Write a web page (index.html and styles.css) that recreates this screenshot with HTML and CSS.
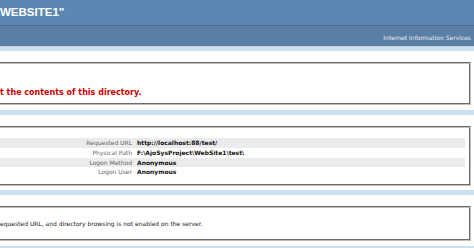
FILE: index.html
```html
<!DOCTYPE html>
<html lang="en">
<head>
    <meta charset="UTF-8">
    <title>IIS 7.5 Detailed Error - 403.14 - Forbidden</title>
    <link rel="stylesheet" href="styles.css">
</head>
<body>
    <div id="header">
        <h1>WEBSITE1"</h1>
    </div>
    <div id="server_version">
        <p>Internet Information Services</p>
    </div>

    <div class="content-container">
        <fieldset>
            <h3>t the contents of this directory.</h3>
        </fieldset>
    </div>

    <div class="content-container">
        <fieldset>
            <div class="details">
                <div class="row alt">
                    <span class="left-cell"></span>
                    <span class="label">Requested URL</span>
                    <span class="value">http://localhost:88/test/</span>
                </div>
                <div class="row">
                    <span class="left-cell"></span>
                    <span class="label">Physical Path</span>
                    <span class="value">F:\AjoSysProject\WebSite1\test\</span>
                </div>
                <div class="row alt">
                    <span class="left-cell"></span>
                    <span class="label">Logon Method</span>
                    <span class="value">Anonymous</span>
                </div>
                <div class="row">
                    <span class="left-cell"></span>
                    <span class="label">Logon User</span>
                    <span class="value">Anonymous</span>
                </div>
            </div>
        </fieldset>
    </div>

    <div class="content-container">
        <fieldset>
            <p>equested URL, and directory browsing is not enabled on the server.</p>
        </fieldset>
    </div>
</body>
</html>
```

FILE: styles.css
```css
body {
    margin: 0;
    height: 248px;
    overflow: hidden;
    font-family: "DejaVu Sans", Verdana, sans-serif;
    background: #cbe1ef;
}
#header {
    height: 25px;
    background-color: #5c87b2;
    overflow: hidden;
}
#header h1 {
    margin: 0;
    padding-top: 5px;
    font-family: "Liberation Sans", Arial, sans-serif;
    font-size: 11.5px;
    line-height: 14px;
    color: #fff;
}
#server_version {
    height: 20px;
    margin-bottom: 4px;
    padding-right: 3px;
    background-color: #5a7fa5;
    border-top: 1px solid #4a6c8e;
    border-bottom: 1px solid #c1cfdd;
    text-align: right;
}
#server_version p {
    margin: 0;
    padding-top: 8px;
    font-size: 6px;
    line-height: 8px;
    color: #e6edf4;
}
.content-container {
    background: #fff;
    padding: 11px 3px 5px 0;
    margin-bottom: 5px;
}
.content-container:nth-of-type(4) {
    padding-bottom: 4px;
}
fieldset {
    margin: 0;
    padding: 0;
    border: 2px groove #c0c0c0;
    border-left: none;
    min-width: 0;
}
h3 {
    margin: 0;
    padding: 24px 0 5px;
    font-size: 8px;
    line-height: 10px;
    color: #cc0000;
}
.details {
    padding: 10px 4px 7px 0;
}
.row {
    display: grid;
    grid-template-columns: 50px 75px 1fr;
    column-gap: 10px;
    height: 9.75px;
    font-size: 6px;
    line-height: 9.75px;
}
.row .label {
    padding-right: 3px;
    text-align: right;
    color: #666;
    margin-left: -10px;
    padding-left: 10px;
}
.row .value {
    margin-left: -10px;
    padding-left: 2px;
    font-weight: bold;
    color: #111;
    white-space: nowrap;
}
.row.alt span {
    background-color: #ebebeb;
}
.content-container p {
    margin: 0;
    padding: 11px 0 10px;
    font-size: 6px;
    line-height: 10px;
    color: #222;
}
```
